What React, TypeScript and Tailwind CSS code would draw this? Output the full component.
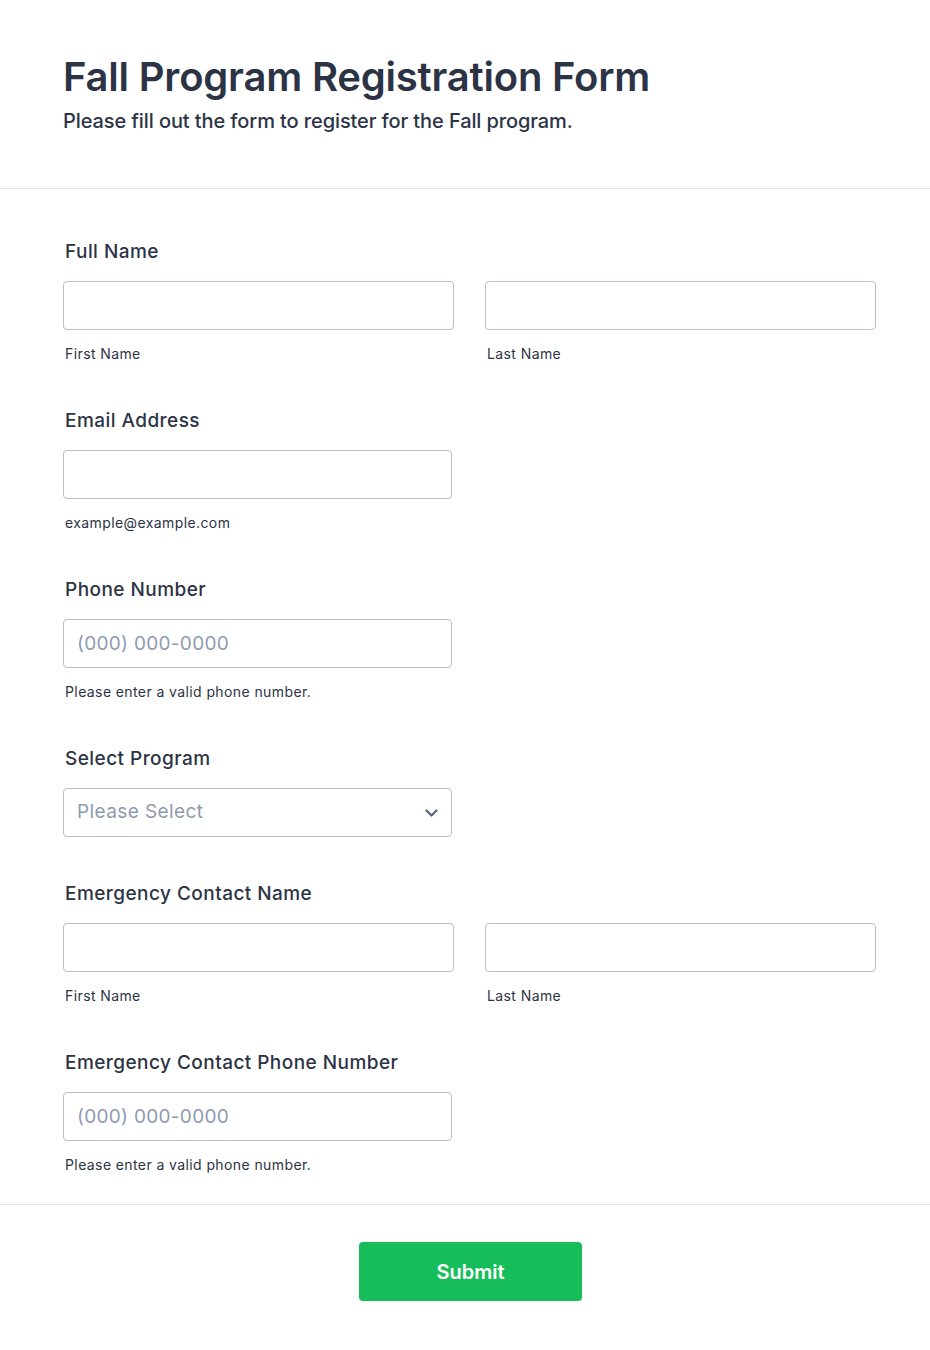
const FONT = "font-['Inter','Liberation_Sans',sans-serif]";

function Label({ children }: { children: React.ReactNode }) {
  return (
    <label className="block text-[19px] leading-[24px] font-medium tracking-[0.45px] text-[#2c3345] pl-[2px]">
      {children}
    </label>
  );
}

function Sub({ children }: { children: React.ReactNode }) {
  return (
    <p className="mt-[14px] text-[14px] leading-[20px] tracking-[0.4px] text-[#2c3345] pl-[2px]">
      {children}
    </p>
  );
}

function Input({ placeholder, className = '' }: { placeholder?: string; className?: string }) {
  return (
    <input
      type="text"
      placeholder={placeholder}
      className={`block h-[49px] rounded-[4px] border border-[#b8bdc9] bg-white px-[13px] text-[19px] tracking-[0.3px] text-[#2c3345] placeholder:text-[#8f9ab0] outline-none ${className}`}
    />
  );
}

function NameField({ label }: { label: string }) {
  return (
    <div className="pb-[45px]">
      <Label>{label}</Label>
      <div className="mt-[17px] grid grid-cols-2 gap-[31px]">
        <div>
          <Input className="w-full" />
          <Sub>First Name</Sub>
        </div>
        <div>
          <Input className="w-full" />
          <Sub>Last Name</Sub>
        </div>
      </div>
    </div>
  );
}

function SingleField({
  label,
  placeholder,
  sub,
}: {
  label: string;
  placeholder?: string;
  sub: string;
}) {
  return (
    <div className="pb-[45px]">
      <Label>{label}</Label>
      <div className="mt-[17px]">
        <Input className="w-[389px]" placeholder={placeholder} />
        <Sub>{sub}</Sub>
      </div>
    </div>
  );
}

export default function App() {
  return (
    <div className={`${FONT} min-h-[1350px] bg-white text-[#2c3345]`}>
      {/* Header */}
      <div className="px-[63px] pt-[53px] pb-[53px] border-b border-[#e3e5ec]">
        <h1 className="text-[40px] leading-[48px] font-semibold tracking-[-0.2px] text-[#2c3345]">
          Fall Program Registration Form
        </h1>
        <p className="mt-[6px] text-[20px] leading-[28px] font-medium tracking-[-0.1px] text-[#2c3345]">
          Please fill out the form to register for the Fall program.
        </p>
      </div>

      {/* Fields */}
      <div className="pl-[63px] w-[876px] pt-[51px]">
        <NameField label="Full Name" />
        <SingleField label="Email Address" sub="example@example.com" />
        <SingleField
          label="Phone Number"
          placeholder="(000) 000-0000"
          sub="Please enter a valid phone number."
        />

        <div className="pb-[45px]">
          <Label>Select Program</Label>
          <div className="mt-[17px] relative w-[389px]">
            <div className="flex h-[49px] items-center justify-between rounded-[4px] border border-[#b8bdc9] bg-white pl-[13px] pr-[13px]">
              <span className="text-[19px] tracking-[0.4px] text-[#8f9ab0]">Please Select</span>
              <svg width="13" height="8" viewBox="0 0 13 8" fill="none">
                <path
                  d="M1.5 1.5l5 5 5-5"
                  stroke="#57647e"
                  strokeWidth="2.2"
                  strokeLinecap="round"
                  strokeLinejoin="round"
                />
              </svg>
            </div>
          </div>
        </div>

        <NameField label="Emergency Contact Name" />
        <div className="pb-[29px]">
          <Label>Emergency Contact Phone Number</Label>
          <div className="mt-[17px]">
            <Input className="w-[389px]" placeholder="(000) 000-0000" />
            <Sub>Please enter a valid phone number.</Sub>
          </div>
        </div>
      </div>

      {/* Footer */}
      <div className="border-t border-[#e3e5ec] pt-[37px]">
        <div className="pl-[63px] w-[876px] flex justify-center">
          <button className="ml-[2px] h-[59px] w-[223px] rounded-[4px] bg-[#18bd5b] text-[20px] font-semibold text-white">
            Submit
          </button>
        </div>
      </div>
    </div>
  );
}
